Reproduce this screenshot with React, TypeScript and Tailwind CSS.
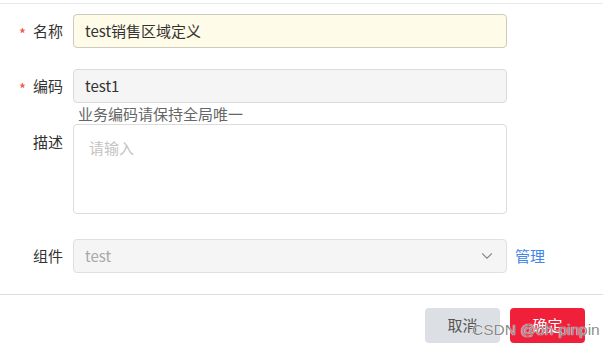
import { ChevronDown } from 'lucide-react';

const font = { fontFamily: '"Noto Sans CJK SC", "Liberation Sans", sans-serif' };

function Label({ text, required }: { text: string; required?: boolean }) {
  return (
    <div className="flex w-[73px] shrink-0 items-center justify-end gap-[7px] pr-[10px] text-[15px] leading-[20px] text-[#333]">
      {required && <span className="relative top-[3px] text-[15px] text-[#f2502f]">*</span>}
      <span>{text}</span>
    </div>
  );
}

export default function App() {
  return (
    <div className="relative h-[351px] w-[603px] overflow-hidden bg-white pt-[3px]" style={font}>
      <div className="border-t border-[#e8e8e8]" />

      {/* Form */}
      <div className="flex flex-col pt-[10px]">
        <div className="flex h-[34px] items-center">
          <Label text="名称" required />
          <div className="flex h-[34px] w-[434px] items-center rounded-[4px] border border-[#cdcbbd] bg-[#fffbe9] px-[11px] text-[15px] text-[#333]">
            test销售区域定义
          </div>
        </div>

        <div className="mt-[21px] flex h-[34px] items-center">
          <Label text="编码" required />
          <div className="flex h-[34px] w-[434px] items-center rounded-[4px] border border-[#dadada] bg-[#f5f5f5] px-[11px] text-[15px] text-[#333]">
            test1
          </div>
        </div>
        <div className="h-[21px] pl-[78px] text-[15px] leading-[21px] text-[#666]">业务编码请保持全局唯一</div>

        <div className="flex">
          <div className="pt-[8px]">
            <Label text="描述" />
          </div>
          <div className="h-[90px] w-[434px] rounded-[4px] border border-[#dcdcdc] bg-white pl-[15px] pt-[11px] text-[15px] leading-[24px] text-[#c4c4c4]">
            请输入
          </div>
        </div>

        <div className="mt-[25px] flex h-[34px] items-center">
          <Label text="组件" />
          <div className="flex h-[34px] w-[434px] items-center justify-between rounded-[4px] border border-[#e0e0e4] bg-[#f5f5f6] pl-[11px] pr-[10px] text-[15px] text-[#a8a8a8]">
            <span>test</span>
            <ChevronDown className="h-[18px] w-[18px] text-[#8a8a90]" strokeWidth={1.5} />
          </div>
          <span className="ml-[8px] text-[15px] text-[#4286e6]">管理</span>
        </div>
      </div>

      {/* Footer */}
      <div className="mt-[21px] border-t border-[#dedede]" />
      <div className="flex justify-end gap-[10px] pr-[18px] pt-[13px]">
        <button className="h-[35px] w-[75px] rounded-[4px] bg-[#dcdfe3] text-[15px] text-[#555]">取消</button>
        <button className="h-[35px] w-[75px] rounded-[4px] bg-[#f0203a] text-[15px] text-white">确定</button>
      </div>

      {/* Watermark */}
      <div
        className="absolute left-[472px] top-[320px] text-[15.5px] leading-[20px] text-[#7a7a7a]/90 [text-shadow:0_0_1px_#fff,0_0_1px_#fff]"
        style={{ fontFamily: '"Liberation Sans", sans-serif' }}
      >
        CSDN @oh-pinpin
      </div>
    </div>
  );
}
